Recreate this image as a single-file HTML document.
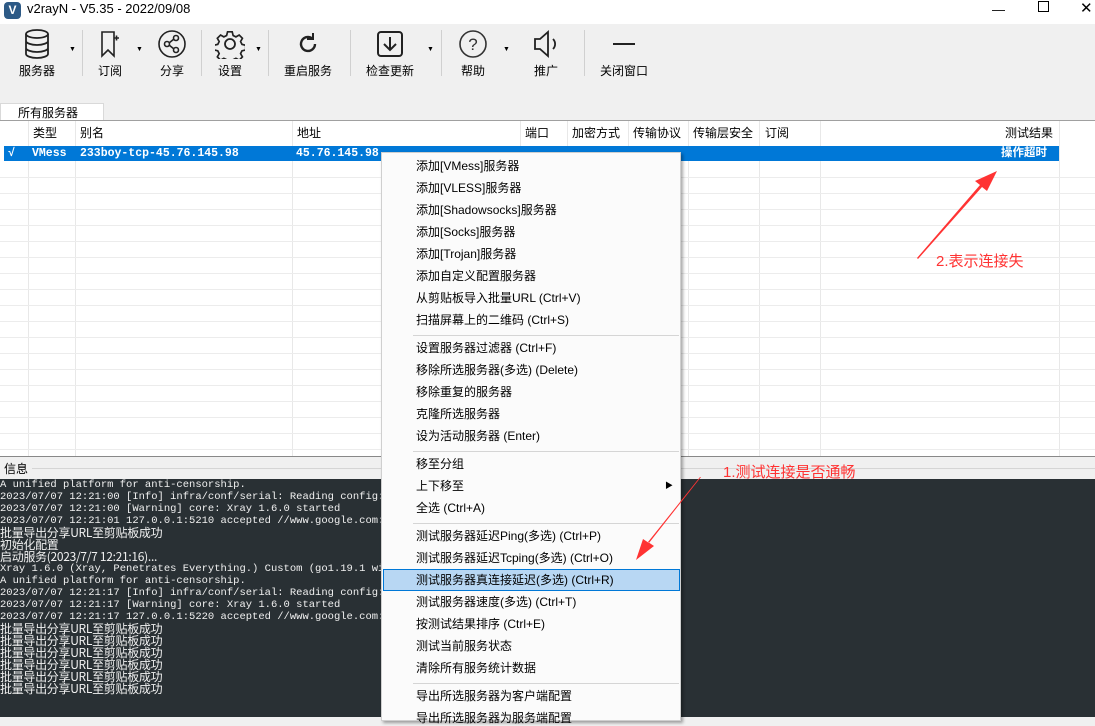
<!DOCTYPE html>
<html><head><meta charset="utf-8"><style>
*{margin:0;padding:0;box-sizing:border-box}
body{width:1095px;height:721px;overflow:hidden;background:#f0f0f0;font-family:"Liberation Sans","Noto Sans CJK SC",sans-serif;font-size:12px;color:#000;position:relative}
.abs{position:absolute}
.title{left:0;top:0;width:1095px;height:24px;background:#fff}
.tb{top:29px;height:56px;text-align:center;font-size:12px}
.tb svg{display:block;margin:0 auto}
.tb div{margin-top:3px}
.sep{top:30px;width:1px;height:46px;background:#d0d0d0}
.dd{font-size:7px;top:46px}
.grid{left:0;top:120px;width:1095px;height:336px;background:#fff;border-top:1px solid #a0a0a0}
.col{top:0;height:336px;border-left:1px solid #e8e8e8}
.hdr{top:3px;font-size:12px}
.row{left:0;width:1095px;height:1px;background:#ececec}
.log{left:0;top:479px;width:1095px;height:238px;background:#293034;color:#f0f0f0;overflow:hidden;padding-top:0}
.log div{height:12px;line-height:12px;white-space:pre;font-family:"Liberation Mono",monospace;font-size:10.5px;overflow:visible}
.log div.c{font-family:"Noto Sans CJK SC",sans-serif;font-size:12px;letter-spacing:-0.3px}
.menu{left:381px;top:152px;width:300px;height:569px;background:#fbfbfb;border:1px solid #cfcfcf;box-shadow:2px 2px 3px rgba(0,0,0,.35)}
.mi{position:absolute;left:34px;font-size:12px;white-space:nowrap;margin-top:-1px}
.ms{position:absolute;left:31px;width:266px;height:1px;background:#d5d5d5}
</style></head><body>
<div class="abs title"></div>
<div class="abs" style="left:4px;top:2px;width:17px;height:17px;border-radius:4px;background:#2d5a86;color:#fff;font-size:12px;font-weight:bold;text-align:center;line-height:17px">V</div>
<div class="abs" style="left:27px;top:1px;font-size:13px">v2rayN - V5.35 - 2022/09/08</div>
<div class="abs" style="left:992px;top:2px;font-size:13px">—</div>
<div class="abs" style="left:1038px;top:1px;width:11px;height:11px;border:1px solid #000"></div>
<div class="abs" style="left:1080px;top:-1px;font-size:15px">✕</div>

<div class="abs tb" style="left:12px;width:50px"><svg width="26" height="30" viewBox="0 0 26 30" fill="none" stroke="#222" stroke-width="1.8"><ellipse cx="13" cy="5" rx="11" ry="4"/><path d="M2 5v20c0 2 5 4 11 4s11-2 11-4V5M2 12c0 2 5 4 11 4s11-2 11-4M2 19c0 2 5 4 11 4s11-2 11-4"/></svg><div>服务器</div></div>
<div class="abs dd" style="left:69px">▼</div>
<div class="abs sep" style="left:82px"></div>
<div class="abs tb" style="left:92px;width:36px"><svg width="22" height="30" viewBox="0 0 22 30" fill="none" stroke="#222" stroke-width="1.6"><path d="M3 3h12v24l-6-6-6 6z"/><path d="M15 9h5M17.5 6.5v5"/></svg><div>订阅</div></div>
<div class="abs dd" style="left:136px">▼</div>
<div class="abs tb" style="left:152px;width:40px"><svg width="30" height="30" viewBox="0 0 30 30" fill="none" stroke="#222" stroke-width="1.6"><circle cx="15" cy="15" r="13"/><circle cx="19" cy="9" r="2.5"/><circle cx="10" cy="15" r="2.5"/><circle cx="19" cy="21" r="2.5"/><path d="M12 14l5-4M12 16l5 4"/></svg><div>分享</div></div>
<div class="abs sep" style="left:201px"></div>
<div class="abs tb" style="left:210px;width:40px"><svg width="30" height="30" viewBox="0 0 30 30" fill="none" stroke="#222" stroke-width="1.8"><path d="M12.5 2h5l1 4 3 1.5 3.5-2 3.5 3.5-2 3.5 1.5 3 4 1v5l-4 1-1.5 3 2 3.5-3.5 3.5-3.5-2-3 1.5-1 4h-5l-1-4-3-1.5-3.5 2-3.5-3.5 2-3.5-1.5-3-4-1v-5l4-1 1.5-3-2-3.5 3.5-3.5 3.5 2 3-1.5z" transform="scale(.93) translate(1 1)"/><circle cx="15" cy="15" r="5"/></svg><div>设置</div></div>
<div class="abs dd" style="left:255px">▼</div>
<div class="abs sep" style="left:268px"></div>
<div class="abs tb" style="left:280px;width:56px"><svg width="30" height="30" viewBox="0 0 30 30" fill="none" stroke="#222" stroke-width="2.4"><path d="M22 15a7 7 0 1 1-3-5.8"/><path d="M20 4v6h-6" stroke-width="2"/></svg><div>重启服务</div></div>
<div class="abs sep" style="left:350px"></div>
<div class="abs tb" style="left:362px;width:56px"><svg width="30" height="30" viewBox="0 0 30 30" fill="none" stroke="#222" stroke-width="2"><rect x="3" y="3" width="24" height="24" rx="3"/><path d="M15 8v13M9 15l6 6 6-6"/></svg><div>检查更新</div></div>
<div class="abs dd" style="left:427px">▼</div>
<div class="abs sep" style="left:441px"></div>
<div class="abs tb" style="left:453px;width:40px"><svg width="30" height="30" viewBox="0 0 30 30" fill="none" stroke="#333" stroke-width="1.6"><circle cx="15" cy="15" r="13"/><text x="15" y="21" text-anchor="middle" font-size="17" fill="#333" stroke="none" font-family="Liberation Sans">?</text></svg><div>帮助</div></div>
<div class="abs dd" style="left:503px">▼</div>
<div class="abs tb" style="left:526px;width:40px"><svg width="30" height="30" viewBox="0 0 30 30" fill="none" stroke="#222" stroke-width="1.8"><path d="M4 10h5l8-7v24l-8-7H4z"/><path d="M22 10a7 7 0 0 1 0 10"/></svg><div>推广</div></div>
<div class="abs sep" style="left:584px"></div>
<div class="abs tb" style="left:596px;width:56px"><svg width="30" height="30" viewBox="0 0 30 30"><path d="M4 15h22" stroke="#222" stroke-width="2"/></svg><div>关闭窗口</div></div>

<div class="abs" style="left:0;top:103px;width:104px;height:18px;background:#fff;border:1px solid #d9d9d9;border-bottom:none"></div>
<div class="abs" style="left:18px;top:104px;font-size:12px">所有服务器</div>

<div class="abs grid">
 <div class="abs" style="left:0;top:0;width:1059px;height:23px;background:#fff"></div>
 <div class="abs col" style="left:28px"></div><div class="abs col" style="left:75px"></div><div class="abs col" style="left:292px"></div><div class="abs col" style="left:520px"></div><div class="abs col" style="left:567px"></div><div class="abs col" style="left:628px"></div><div class="abs col" style="left:688px"></div><div class="abs col" style="left:759px"></div><div class="abs col" style="left:820px"></div><div class="abs col" style="left:1059px"></div>
 <div class="abs hdr" style="left:33px">类型</div><div class="abs hdr" style="left:80px">别名</div><div class="abs hdr" style="left:297px">地址</div><div class="abs hdr" style="left:525px">端口</div><div class="abs hdr" style="left:572px">加密方式</div><div class="abs hdr" style="left:633px">传输协议</div><div class="abs hdr" style="left:693px">传输层安全</div><div class="abs hdr" style="left:765px">订阅</div><div class="abs hdr" style="left:1005px">测试结果</div>
 <div class="abs" style="left:4px;top:25px;width:1055px;height:15px;background:#0078d7;color:#fff;font-family:'Liberation Mono','Noto Sans CJK SC',monospace;font-weight:bold;font-size:11.5px;line-height:15px">
  <span class="abs" style="left:4px">√</span><span class="abs" style="left:28px">VMess</span><span class="abs" style="left:76px">233boy-tcp-45.76.145.98</span><span class="abs" style="left:292px">45.76.145.98</span><span class="abs" style="left:997px;font-family:'Liberation Sans','Noto Sans CJK SC',sans-serif">操作超时</span>
 </div>
 <div class="abs row" style="top:56px"></div><div class="abs row" style="top:72px"></div><div class="abs row" style="top:88px"></div><div class="abs row" style="top:104px"></div><div class="abs row" style="top:120px"></div><div class="abs row" style="top:136px"></div><div class="abs row" style="top:152px"></div><div class="abs row" style="top:168px"></div><div class="abs row" style="top:184px"></div><div class="abs row" style="top:200px"></div><div class="abs row" style="top:216px"></div><div class="abs row" style="top:232px"></div><div class="abs row" style="top:248px"></div><div class="abs row" style="top:264px"></div><div class="abs row" style="top:280px"></div><div class="abs row" style="top:296px"></div><div class="abs row" style="top:312px"></div><div class="abs row" style="top:328px"></div>
</div>
<div class="abs" style="left:0;top:456px;width:1095px;height:1px;background:#888"></div>
<div class="abs" style="left:4px;top:460px;font-size:12px">信息</div>
<div class="abs" style="left:32px;top:468px;width:1063px;height:1px;background:#d5d5d5"></div>

<div class="abs log">
<div>A unified platform for anti-censorship.</div>
<div>2023/07/07 12:21:00 [Info] infra/conf/serial: Reading config: stdin: json</div>
<div>2023/07/07 12:21:00 [Warning] core: Xray 1.6.0 started</div>
<div>2023/07/07 12:21:01 127.0.0.1:5210 accepted //www.google.com:443 [proxy]</div>
<div class="c">批量导出分享URL至剪贴板成功</div>
<div class="c">初始化配置</div>
<div class="c">启动服务(2023/7/7 12:21:16)...</div>
<div>Xray 1.6.0 (Xray, Penetrates Everything.) Custom (go1.19.1 windows/amd64)</div>
<div>A unified platform for anti-censorship.</div>
<div>2023/07/07 12:21:17 [Info] infra/conf/serial: Reading config: stdin: json</div>
<div>2023/07/07 12:21:17 [Warning] core: Xray 1.6.0 started</div>
<div>2023/07/07 12:21:17 127.0.0.1:5220 accepted //www.google.com:443 [proxy]</div>
<div class="c">批量导出分享URL至剪贴板成功</div>
<div class="c">批量导出分享URL至剪贴板成功</div>
<div class="c">批量导出分享URL至剪贴板成功</div>
<div class="c">批量导出分享URL至剪贴板成功</div>
<div class="c">批量导出分享URL至剪贴板成功</div>
<div class="c">批量导出分享URL至剪贴板成功</div>
</div>

<div class="abs menu">
 <div class="mi" style="top:5px">添加[VMess]服务器</div>
 <div class="mi" style="top:27px">添加[VLESS]服务器</div>
 <div class="mi" style="top:49px">添加[Shadowsocks]服务器</div>
 <div class="mi" style="top:71px">添加[Socks]服务器</div>
 <div class="mi" style="top:93px">添加[Trojan]服务器</div>
 <div class="mi" style="top:115px">添加自定义配置服务器</div>
 <div class="mi" style="top:137px">从剪贴板导入批量URL (Ctrl+V)</div>
 <div class="mi" style="top:159px">扫描屏幕上的二维码 (Ctrl+S)</div>
 <div class="ms" style="top:182px"></div>
 <div class="mi" style="top:187px">设置服务器过滤器 (Ctrl+F)</div>
 <div class="mi" style="top:209px">移除所选服务器(多选) (Delete)</div>
 <div class="mi" style="top:231px">移除重复的服务器</div>
 <div class="mi" style="top:253px">克隆所选服务器</div>
 <div class="mi" style="top:275px">设为活动服务器 (Enter)</div>
 <div class="ms" style="top:298px"></div>
 <div class="mi" style="top:303px">移至分组</div>
 <div class="mi" style="top:325px">上下移至</div>
 <div class="abs" style="left:283px;top:327px;font-size:8px">▶</div>
 <div class="mi" style="top:347px">全选 (Ctrl+A)</div>
 <div class="ms" style="top:370px"></div>
 <div class="mi" style="top:375px">测试服务器延迟Ping(多选) (Ctrl+P)</div>
 <div class="mi" style="top:397px">测试服务器延迟Tcping(多选) (Ctrl+O)</div>
 <div class="abs" style="left:1px;top:416px;width:297px;height:22px;background:#b8d7f3;border:1px solid #0078d7"></div>
 <div class="mi" style="top:419px">测试服务器真连接延迟(多选) (Ctrl+R)</div>
 <div class="mi" style="top:441px">测试服务器速度(多选) (Ctrl+T)</div>
 <div class="mi" style="top:463px">按测试结果排序 (Ctrl+E)</div>
 <div class="mi" style="top:485px">测试当前服务状态</div>
 <div class="mi" style="top:507px">清除所有服务统计数据</div>
 <div class="ms" style="top:530px"></div>
 <div class="mi" style="top:535px">导出所选服务器为客户端配置</div>
 <div class="mi" style="top:557px">导出所选服务器为服务端配置</div>
</div>

<svg class="abs" style="left:0;top:0" width="1095" height="721">
 <path d="M700 477 L648 542 L654 546 L636 560 L643 539 L649 543 L701 477z" fill="#f33"/>
 <path d="M917 258 L980 185 L975 181 L997 171 L987 191 L982 187 L918 259z" fill="#f33"/>
</svg>
<div class="abs" style="left:723px;top:461px;color:#f33;font-size:15px">1.测试连接是否通畅</div>
<div class="abs" style="left:936px;top:250px;color:#f33;font-size:15px">2.表示连接失</div>
</body></html>
